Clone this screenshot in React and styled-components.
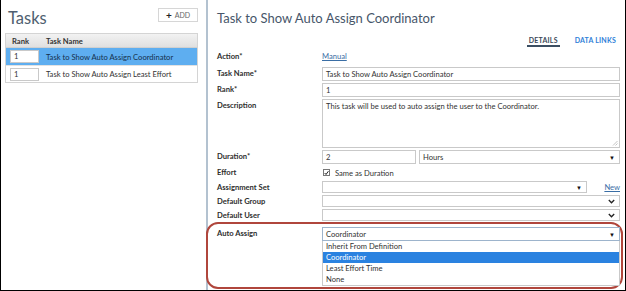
import React from "react";
import styled, { createGlobalStyle } from "styled-components";

const GlobalStyle = createGlobalStyle`
  html, body {
    margin: 0;
    padding: 0;
    background: #fff;
  }
  body {
    font-family: Lato, "Segoe UI", "Noto Sans", sans-serif;
    color: #333;
  }
  * {
    box-sizing: border-box;
  }
`;

const Frame = styled.div`
  width: 626px;
  height: 291px;
  display: flex;
  border: 1px solid #000;
  border-top: none;
  overflow: hidden;
  background: #fff;
`;

const LeftPanel = styled.div`
  width: 205px;
  padding: 0 8px 0 4px;
  flex-shrink: 0;
`;

const PanelHeader = styled.div`
  height: 33px;
  display: flex;
  align-items: center;
  justify-content: space-between;
  padding-left: 3px;
  padding-top: 3px;
`;

const PanelTitle = styled.h1`
  margin: 0;
  font-size: 16.5px;
  font-weight: 400;
  color: #4f5f70;
`;

const AddButton = styled.button`
  height: 14px;
  width: 40px;
  padding: 0;
  border: 1px solid #d6d6d6;
  background: #fff;
  font-family: inherit;
  font-size: 7px;
  color: #666;
  display: flex;
  align-items: center;
  justify-content: center;
  gap: 3px;
  margin-top: -6px;

  b {
    font-size: 10px;
    color: #222;
    line-height: 1;
  }
`;

const Table = styled.div`
  border: 1px solid #d4d4d4;
  font-size: 7.6px;
`;

const HeaderRow = styled.div`
  display: grid;
  grid-template-columns: 34px 1fr;
  height: 14px;
  align-items: center;
  background: linear-gradient(#f2f2f2, #e0e0e0);
  border-bottom: 1px solid #d0d0d0;
  font-weight: 700;
  color: #333;
  padding-left: 6px;
`;

const Row = styled.div`
  display: grid;
  grid-template-columns: 36px 1fr;
  height: 17px;
  align-items: center;
  padding-left: 4px;
  background: ${(p) => (p.$selected ? "#5eaef0" : "#fff")};
  color: ${(p) => (p.$selected ? "#15304d" : "#333")};
  border-top: ${(p) => (p.$first ? "none" : "1px solid #e2e2e2")};
`;

const RankBox = styled.div`
  width: 29px;
  height: 13px;
  background: #fff;
  border: 1px solid #c9c9c9;
  padding-left: 3px;
  line-height: 11px;
  color: #333;
`;

const Divider = styled.div`
  width: 2px;
  background: #b3c2d0;
  flex-shrink: 0;
`;

const RightPanel = styled.div`
  flex: 1;
  padding: 0 5px 0 9px;
`;

const Title = styled.h2`
  margin: 0;
  padding-top: 10px;
  height: 33px;
  font-size: 13px;
  font-weight: 400;
  color: #47566a;
`;

const Tabs = styled.div`
  display: flex;
  justify-content: flex-end;
  gap: 13px;
  height: 17px;
  padding-right: 2px;
`;

const Tab = styled.div`
  font-size: 7px;
  font-weight: 700;
  letter-spacing: 0.2px;
  color: ${(p) => (p.$active ? "#3a4858" : "#2f80d8")};
  padding: 3px 2px 0;
  height: 14px;
  border-bottom: ${(p) => (p.$active ? "2px solid #3b4e62" : "2px solid transparent")};
`;

const Form = styled.div`
  display: grid;
  grid-template-columns: 105px 1fr;
  row-gap: 2px;
  font-size: 7.6px;
  align-items: start;
`;

const Label = styled.div`
  font-weight: 700;
  color: #2e2e2e;
  height: ${(p) => p.$h || 14}px;
  line-height: ${(p) => p.$lh || 12}px;
`;

const LinkText = styled.a`
  color: #3a6ea5;
  text-decoration: underline;
  line-height: 12px;
  cursor: pointer;
`;

const Input = styled.div`
  height: ${(p) => p.$h || 14}px;
  border: 1px solid #c9c9c9;
  padding: 1px 3px;
  line-height: 10px;
  color: #333;
  background: #fff;
  position: relative;
  width: ${(p) => p.$w || "auto"};
`;

const Grip = styled.svg`
  position: absolute;
  right: 1px;
  bottom: 1px;
`;

const Pair = styled.div`
  display: flex;
  gap: 3px;
`;

const Select = styled.div`
  flex: ${(p) => (p.$fill ? 1 : "none")};
  height: ${(p) => p.$h || 14}px;
  border: 1px solid ${(p) => p.$border || "#c9c9c9"};
  display: flex;
  align-items: center;
  justify-content: space-between;
  padding: 0 4px 0 3px;
  background: #fff;
  color: #333;
`;

const Arrow = styled.span`
  font-size: 6px;
  color: #111;
`;

const Check = styled.div`
  display: flex;
  align-items: center;
  gap: 5px;
  height: 13px;
  padding-left: 1px;
`;

const CheckBox = styled.span`
  width: 7px;
  height: 7px;
  border: 1px solid #777;
  display: inline-flex;
  align-items: center;
  justify-content: center;
  background: #fff;
`;

const NewLink = styled(LinkText)`
  width: 30px;
  text-align: right;
`;

const Annotation = styled.div`
  grid-column: 1 / 3;
  margin: -1px -3px 0 -11px;
  height: 67px;
  border: 2px solid #b0463c;
  border-radius: 12px;
  display: grid;
  grid-template-columns: 105px 1fr;
  padding: 3px 1px 0 9px;
`;

const List = styled.div`
  border: 1px solid #c9c9c9;
  border-top: none;
  background: #fff;
`;

const Option = styled.div`
  height: 11px;
  line-height: 11px;
  padding-left: 3px;
  background: ${(p) => (p.$selected ? "#2a82e0" : "transparent")};
  color: ${(p) => (p.$selected ? "#fff" : "#333")};
`;

const Chevron = () => (
  <svg width="7" height="5" viewBox="0 0 7 5">
    <path d="M0.8 1 L3.5 3.8 L6.2 1" fill="none" stroke="#222" strokeWidth="1.3" />
  </svg>
);

export default function App() {
  return (
    <>
      <GlobalStyle />
      <Frame>
        <LeftPanel>
          <PanelHeader>
            <PanelTitle>Tasks</PanelTitle>
            <AddButton>
              <b>+</b>ADD
            </AddButton>
          </PanelHeader>
          <Table>
            <HeaderRow>
              <span>Rank</span>
              <span>Task Name</span>
            </HeaderRow>
            <Row $selected $first>
              <RankBox>1</RankBox>
              <span>Task to Show Auto Assign Coordinator</span>
            </Row>
            <Row>
              <RankBox>1</RankBox>
              <span>Task to Show Auto Assign Least Effort</span>
            </Row>
          </Table>
        </LeftPanel>
        <Divider />
        <RightPanel>
          <Title>Task to Show Auto Assign Coordinator</Title>
          <Tabs>
            <Tab $active>DETAILS</Tab>
            <Tab>DATA LINKS</Tab>
          </Tabs>
          <Form>
            <Label $h={15}>Action*</Label>
            <div style={{ height: 15 }}>
              <LinkText>Manual</LinkText>
            </div>

            <Label>Task Name*</Label>
            <Input>Task to Show Auto Assign Coordinator</Input>

            <Label>Rank*</Label>
            <Input>1</Input>

            <Label $h={49}>Description</Label>
            <Input $h={49}>
              This task will be used to auto assign the user to the Coordinator.
              <Grip width="6" height="6" viewBox="0 0 6 6">
                <path d="M5.5 1 L1 5.5 M5.5 3.5 L3.5 5.5" stroke="#aaa" strokeWidth="0.7" />
              </Grip>
            </Input>

            <Label>Duration*</Label>
            <Pair>
              <Input $w="94px">2</Input>
              <Select $fill>
                <span>Hours</span>
                <Arrow>▼</Arrow>
              </Select>
            </Pair>

            <Label $h={13}>Effort</Label>
            <Check>
              <CheckBox>
                <svg width="6" height="6" viewBox="0 0 6 6">
                  <path d="M0.8 3 L2.4 4.8 L5.3 0.8" fill="none" stroke="#222" strokeWidth="1.2" />
                </svg>
              </CheckBox>
              <span>Same as Duration</span>
            </Check>

            <Label $h={12}>Assignment Set</Label>
            <Pair>
              <Select $fill $h={12}>
                <span />
                <Arrow>▼</Arrow>
              </Select>
              <NewLink>New</NewLink>
            </Pair>

            <Label $h={12}>Default Group</Label>
            <Select $h={12}>
              <span />
              <Chevron />
            </Select>

            <Label $h={12}>Default User</Label>
            <Select $h={12}>
              <span />
              <Chevron />
            </Select>

            <Annotation>
              <Label>Auto Assign</Label>
              <div>
                <Select $border="#9db4cc">
                  <span>Coordinator</span>
                  <Arrow>▼</Arrow>
                </Select>
                <List>
                  <Option>Inherit From Definition</Option>
                  <Option $selected>Coordinator</Option>
                  <Option>Least Effort Time</Option>
                  <Option>None</Option>
                </List>
              </div>
            </Annotation>
          </Form>
        </RightPanel>
      </Frame>
    </>
  );
}
